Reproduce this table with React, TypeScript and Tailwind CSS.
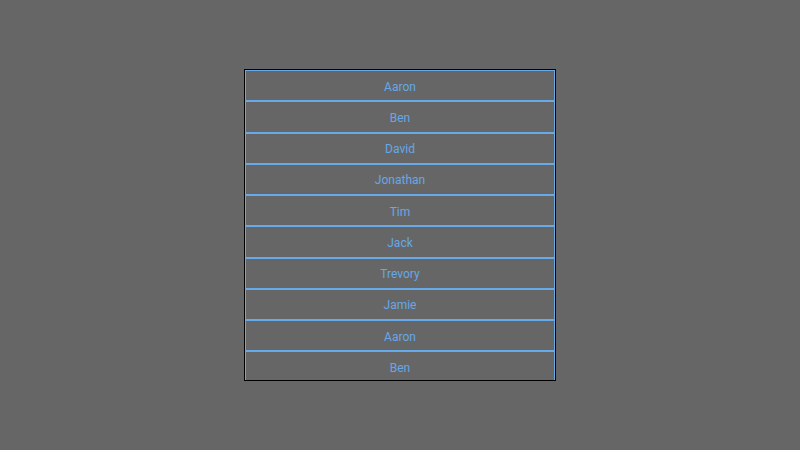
import React from "react";

const names = ["Aaron", "Ben", "David", "Jonathan", "Tim", "Jack", "Trevory", "Jamie", "Aaron", "Ben"];

export default function App() {
  return (
    <div className="flex h-[450px] w-[800px] items-center justify-center bg-[#666666]" style={{ fontFamily: "Roboto, sans-serif" }}>
      <div className="flex h-[312px] w-[312px] flex-col overflow-hidden border border-black">
        {names.map((n, i) => (
          <div
            key={i}
            className="flex h-[31.25px] shrink-0 items-center justify-center border border-[#66aaea] pt-[2px] text-[12px] text-[#66a8e6]"
          >
            {n}
          </div>
        ))}
      </div>
    </div>
  );
}
